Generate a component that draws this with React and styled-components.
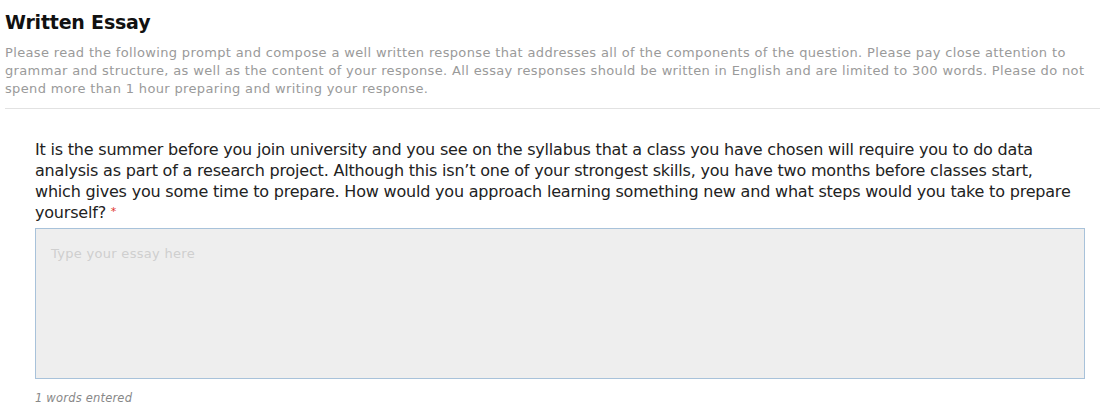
import React from "react";
import styled, { createGlobalStyle } from "styled-components";

const Global = createGlobalStyle`
  html, body { margin: 0; padding: 0; background: #fff; }
  body { font-family: "DejaVu Sans", "Open Sans", sans-serif; }
`;

const Page = styled.div`
  padding: 9px 0 0 5px;
  width: 1095px;
`;

const Title = styled.h2`
  margin: 0;
  font-family: "DejaVu Sans", sans-serif;
  font-weight: 700;
  font-size: 19px;
  line-height: 26px;
  color: #111;
  letter-spacing: -0.2px;
`;

const Intro = styled.p`
  margin: 9px 0 0;
  font-size: 13px;
  line-height: 18px;
  letter-spacing: 0.35px;
  color: #9a9a9a;
  padding-right: 10px;
`;

const Divider = styled.hr`
  margin: 10px 0 0;
  border: 0;
  border-top: 1px solid #e2e2e2;
`;

const Question = styled.div`
  padding: 30px 15px 0 30px;
`;

const Prompt = styled.p`
  margin: 0;
  max-width: 1044px;
  font-size: 16px;
  line-height: 21px;
  letter-spacing: -0.2px;
  color: #222;
`;

const Required = styled.span`
  display: inline-block;
  color: #e0302a;
  font-size: 11px;
  line-height: 1;
  vertical-align: 3px;
`;

const Essay = styled.textarea`
  display: block;
  box-sizing: border-box;
  width: 1050px;
  height: 151px;
  margin-top: 5px;
  padding: 17px 15px;
  background: #eeeeee;
  border: 1px solid #a8c2da;
  resize: none;
  outline: none;
  font-family: "DejaVu Sans", sans-serif;
  font-size: 13px;
  letter-spacing: 0.3px;
  color: #333;
  caret-color: #222;
  &::placeholder { color: #cfcfcf; }
`;

const Count = styled.div`
  margin-top: 12px;
  font-size: 11.5px;
  font-style: italic;
  letter-spacing: 0.2px;
  color: #888;
`;

export default function App() {
  return (
    <>
      <Global />
      <Page>
        <Title>Written Essay</Title>
        <Intro>
          Please read the following prompt and compose a well written response that addresses all of the components of the question. Please pay close attention to grammar and structure, as well as the content of your response. All essay responses should be written in English and are limited to 300 words. Please do not spend more than 1 hour preparing and writing your response.
        </Intro>
        <Divider />
        <Question>
          <Prompt>
            It is the summer before you join university and you see on the syllabus that a class you have chosen will require you to do data analysis as part of a research project. Although this isn’t one of your strongest skills, you have two months before classes start, which gives you some time to prepare. How would you approach learning something new and what steps would you take to prepare yourself? <Required>*</Required>
          </Prompt>
          <Essay placeholder="Type your essay here" autoFocus />
          <Count>1 words entered</Count>
        </Question>
      </Page>
    </>
  );
}
